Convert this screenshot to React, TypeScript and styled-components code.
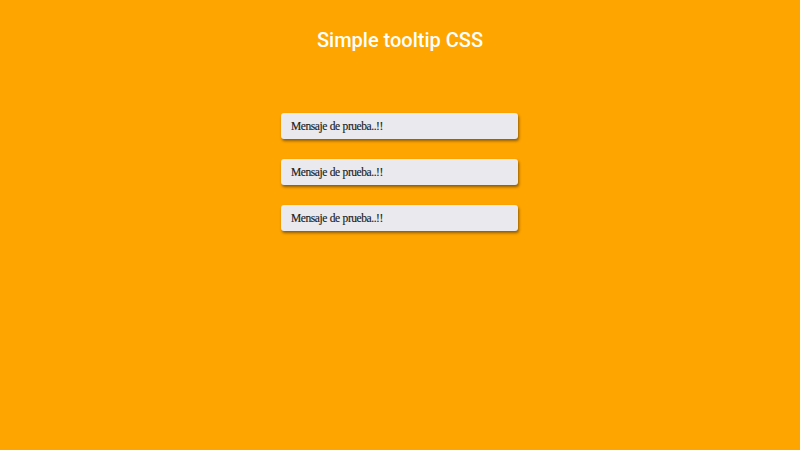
import React from "react";
import styled, { createGlobalStyle } from "styled-components";

const Global = createGlobalStyle`
  html, body { margin: 0; padding: 0; }
  body { background: #ffa500; width: 800px; height: 450px; overflow: hidden; }
`;

const Page = styled.div`
  display: flex;
  flex-direction: column;
  align-items: center;
  padding-top: 28px;
`;

const Title = styled.h1`
  margin: 0;
  font-family: Roboto, "Liberation Sans", sans-serif;
  font-weight: 500;
  font-size: 20px;
  line-height: 24px;
  color: #ffffff;
`;

const List = styled.div`
  display: flex;
  flex-direction: column;
  gap: 20px;
  margin-top: 61px;
  margin-right: 1px;
`;

const Message = styled.div`
  box-sizing: border-box;
  width: 237px;
  height: 26px;
  padding: 0 10px;
  display: flex;
  align-items: center;
  background: #e9e9ee;
  border-radius: 3px;
  box-shadow: 1px 2px 3px rgba(0, 0, 0, 0.45);
  font-family: "Liberation Serif", serif;
  font-size: 11.5px;
  letter-spacing: -0.45px;
  word-spacing: 0.5px;
  color: #1a1a1a;
  -webkit-text-stroke: 0.15px #1a1a1a;
`;

export default function App() {
  return (
    <>
      <Global />
      <Page>
        <Title>Simple tooltip CSS</Title>
        <List>
          <Message>Mensaje de prueba..!!</Message>
          <Message>Mensaje de prueba..!!</Message>
          <Message>Mensaje de prueba..!!</Message>
        </List>
      </Page>
    </>
  );
}
